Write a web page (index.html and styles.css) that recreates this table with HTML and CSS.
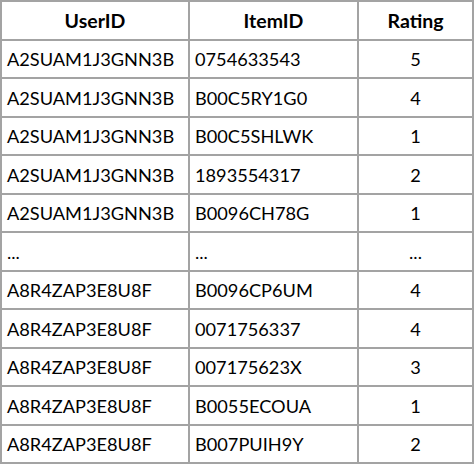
FILE: index.html
```html
<!DOCTYPE html>
<html>
<head>
<meta charset="utf-8">
<link rel="stylesheet" href="styles.css">
</head>
<body>
<table class="ratings">
  <colgroup>
    <col class="c-user">
    <col class="c-item">
    <col class="c-rating">
  </colgroup>
  <thead>
    <tr><th>UserID</th><th>ItemID</th><th>Rating</th></tr>
  </thead>
  <tbody>
    <tr><td>A2SUAM1J3GNN3B</td><td>0754633543</td><td class="num">5</td></tr>
    <tr><td>A2SUAM1J3GNN3B</td><td>B00C5RY1G0</td><td class="num">4</td></tr>
    <tr><td>A2SUAM1J3GNN3B</td><td>B00C5SHLWK</td><td class="num">1</td></tr>
    <tr><td>A2SUAM1J3GNN3B</td><td>1893554317</td><td class="num">2</td></tr>
    <tr><td>A2SUAM1J3GNN3B</td><td>B0096CH78G</td><td class="num">1</td></tr>
    <tr><td>...</td><td>...</td><td class="num">...</td></tr>
    <tr><td>A8R4ZAP3E8U8F</td><td>B0096CP6UM</td><td class="num">4</td></tr>
    <tr><td>A8R4ZAP3E8U8F</td><td>0071756337</td><td class="num">4</td></tr>
    <tr><td>A8R4ZAP3E8U8F</td><td>007175623X</td><td class="num">3</td></tr>
    <tr><td>A8R4ZAP3E8U8F</td><td>B0055ECOUA</td><td class="num">1</td></tr>
    <tr><td>A8R4ZAP3E8U8F</td><td>B007PUIH9Y</td><td class="num">2</td></tr>
  </tbody>
</table>
</body>
</html>
```

FILE: styles.css
```css
html, body {
  margin: 0;
  padding: 0;
  background: #ffffff;
}

.ratings {
  border-collapse: collapse;
  table-layout: fixed;
  width: 472px;
  font-family: Lato, "Liberation Sans", sans-serif;
  font-size: 18.2px;
  color: #000000;
}

.c-user { width: 188px; }
.c-item { width: 169px; }
.c-rating { width: 115px; }

.ratings th,
.ratings td {
  border: 2px solid #a3a3a3;
  height: 38.5px;
  box-sizing: border-box;
  padding: 0 0 7px 5px;
  vertical-align: bottom;
  text-align: left;
  white-space: nowrap;
  line-height: 22px;
}

.ratings th {
  font-weight: 700;
  font-size: 19.5px;
  text-align: center;
  padding-left: 0;
}

.ratings td.num {
  text-align: center;
  padding-left: 0;
}
```
